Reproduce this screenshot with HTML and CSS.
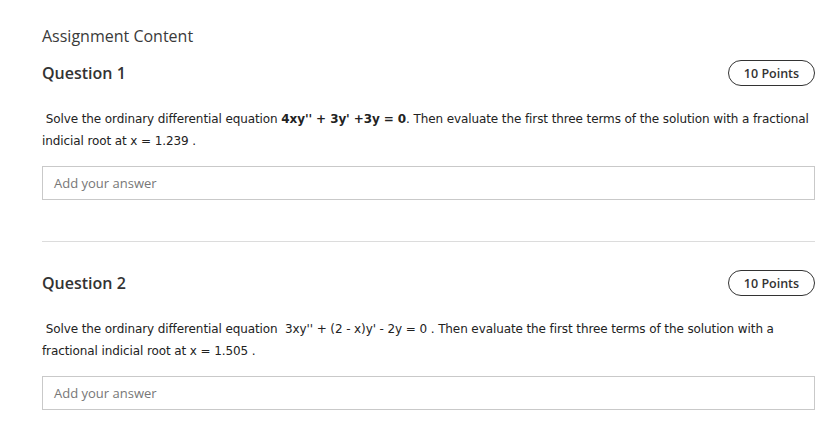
FILE: index.html
```html
<!DOCTYPE html>
<html>
<head>
<meta charset="utf-8">
<link rel="stylesheet" href="styles.css">
</head>
<body>
<div class="page">
  <h1 class="title">Assignment Content</h1>
  <section class="question">
    <div class="q-head">
      <h2 class="q-name">Question 1</h2>
      <span class="points">10 Points</span>
    </div>
    <p class="q-text"><span>&nbsp;Solve the ordinary differential equation </span><b class="eq">4xy'' + 3y' +3y = 0</b><span>. Then evaluate the first three terms of the solution with a fractional</span> <span>indicial root at x = 1.239 .</span></p>
    <div class="answer">Add your answer</div>
  </section>
  <hr class="divider">
  <section class="question">
    <div class="q-head">
      <h2 class="q-name">Question 2</h2>
      <span class="points">10 Points</span>
    </div>
    <p class="q-text">&nbsp;Solve the ordinary differential equation &nbsp;3xy'' + (2 - x)y' - 2y = 0 . Then evaluate the first three terms of the solution with a fractional indicial root at x = 1.505 .</p>
    <div class="answer">Add your answer</div>
  </section>
</div>
</body>
</html>
```
FILE: styles.css
```css
html, body {
  margin: 0;
  padding: 0;
  background: #fff;
}
.page {
  padding: 24px 0 0 42px;
  width: 773px;
  font-family: "Open Sans", "Noto Sans", sans-serif;
  color: #333;
}
.title {
  margin: 0;
  font-size: 16px;
  font-weight: 400;
  line-height: 24px;
  color: #3a3a3a;
}
.question {
  display: flex;
  flex-direction: column;
}
.q-head {
  display: flex;
  justify-content: space-between;
  align-items: center;
  height: 26px;
}
.page > .question:first-of-type {
  margin-top: 12px;
}
.q-name {
  margin: 0;
  font-size: 16px;
  font-weight: 600;
  color: #333;
  line-height: 24px;
}
.points {
  box-sizing: border-box;
  height: 26px;
  width: 87px;
  border: 1px solid #333;
  border-radius: 13px;
  font-size: 12.5px;
  font-weight: 600;
  color: #333;
  display: flex;
  align-items: center;
  justify-content: center;
}
.q-text {
  margin: 22px 0 0 0;
  font-family: "DejaVu Sans", sans-serif;
  font-size: 12px;
  line-height: 22px;
  color: #222;
  letter-spacing: -0.1px;
}
.eq {
  font-weight: 700;
}
.answer {
  box-sizing: border-box;
  margin-top: 14px;
  height: 34px;
  border: 1px solid #c9c9c9;
  padding: 0 11px;
  display: flex;
  align-items: center;
  font-size: 13px;
  color: #777;
}
.divider {
  margin: 41px 0 28px 0;
  border: 0;
  border-top: 1px solid #dcdcdc;
  height: 0;
}
```
